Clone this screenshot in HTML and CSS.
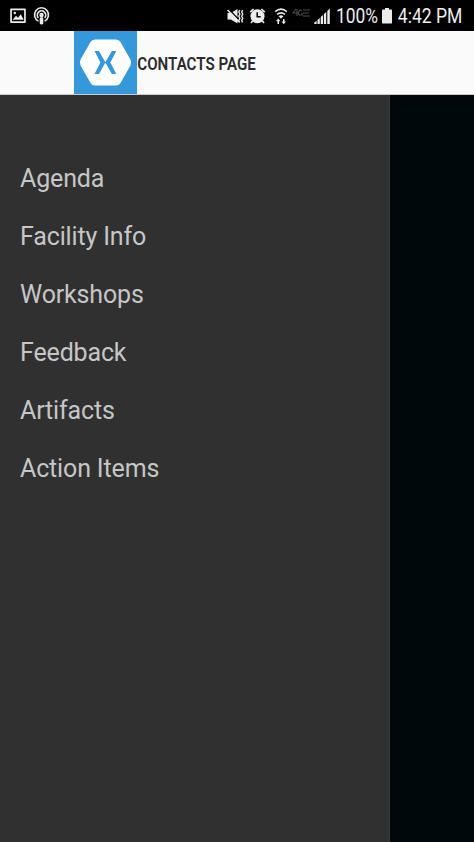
FILE: index.html
```html
<!DOCTYPE html>
<html lang="en">
<head>
<meta charset="utf-8">
<title>Contacts Page</title>
<link rel="stylesheet" href="styles.css">
</head>
<body>
<div class="screen">
  <div class="status-bar">
    <div class="status-left">
      <svg class="icon" width="16" height="16" viewBox="0 0 16 16"><path fill-rule="evenodd" d="M1 .5h14q.8 0 .8.8v12.900q0 .8-.8.8H1q-.8 0-.8-.8V1.300q0-.8.8-.8zM1.900 2.200v11.100h12.200V2.200z"/><path d="M2.600 11.700 6 7.700l2 2 2.700-3.400 3 5.400z"/><circle cx="4.800" cy="5" r="1.200"/></svg>
      <svg class="icon" width="17" height="18" viewBox="0 0 17 18"><g class="line"><path d="M5.400 14.100A7 7 0 1 1 11.600 14.100"/><path d="M5.400 10.900A4.200 4.200 0 1 1 11.600 10.900"/></g><circle cx="8.500" cy="8" r="2.200"/><rect x="6.700" y="10.300" width="3.600" height="7.200" rx="1.400"/></svg>
    </div>
    <div class="status-right">
      <svg class="icon mute" width="17" height="17" viewBox="0 0 17 17"><path d="M.5 5h3.300L10.500 1v14.500L3.800 11.600H.5z"/><path class="cut" d="M1.800 1 12.600 12.500"/><path class="line" d="M.6 2 12 14"/><path class="line thin" d="m12.700 2-.9 2 1.100 2-1.100 2.200 1.100 2.200-1.100 2.100.9 2m2.900-12.500-.9 2 1.100 2-1.100 2.200 1.100 2.200-1.100 2.100.9 2"/></svg>
      <svg class="icon alarm" width="17" height="16" viewBox="0 0 17 16"><circle cx="8.500" cy="8.200" r="7"/><path class="line" d="M1.200 4.200 4.600 1M15.800 4.200 12.400 1M3.500 13l-1.500 2M13.500 13l1.500 2"/><path class="clock-hand" d="M8.200 4.200v4.500h3.500"/></svg>
      <svg class="icon wifi" width="14" height="17" viewBox="0 0 14 17"><g class="line"><path d="M1.200 3.700q5.800-5 11.600 0M3.100 6.400q3.900-3.100 7.800 0"/></g><path d="M4.600 8.200q2.400-1.700 4.800 0L7 10.800zM4.200 10.500l2.200 2.700H5V16H3.500v-2.800H2zM9 11h1.500v2.500h1.500L9.700 16.300l-2.200-2.800H9z"/></svg>
      <svg class="lte" width="19" height="11" viewBox="0 0 19 11"><path d="M4 1 1 5h4M5 1v7M10 2.500Q8 1 6.800 3.500T7.500 7H10V5M11 2h7M11 5h6M11 8h7"/></svg>
      <svg class="icon signal" width="17" height="17" viewBox="0 0 17 17"><path d="M.3 14.500 2.600 12.800V16H.3zM3.500 12 5.800 10V16H3.500zM6.700 9 9 7V16H6.700zM9.900 6 12.200 4V16H9.900zM13.300 3 15.800.5V16h-2.500z"/></svg>
      <svg class="percent" width="42" height="24"><text x="0" y="19.300" textLength="42" lengthAdjust="spacingAndGlyphs">100%</text></svg>
      <svg class="icon battery" width="10" height="16" viewBox="0 0 10 16"><path d="M3 0h4v1.600h2.200q.8 0 .8.800v12.300q0 .9-.9.900H.9q-.9 0-.9-.9V2.400q0-.8.8-.8H3z"/></svg>
      <svg class="time" width="66" height="24"><text x=".8" y="19.300" textLength="64.500" lengthAdjust="spacingAndGlyphs">4:42 PM</text></svg>
    </div>
  </div>
  <header class="app-bar">
    <svg class="logo" width="63" height="63" viewBox="0 0 63 63"><path class="hexagon" d="M21 8.500h21q3 0 4.500 2.600l9.900 17.500q1.600 2.900 0 5.800l-9.900 17.500q-1.500 2.600-4.500 2.600H21q-3 0-4.500-2.600L6.600 34.400q-1.600-2.900 0-5.800l9.900-17.500Q18 8.500 21 8.500z"/><path class="mark" d="M20.500 20h4.500l5.900 10.500q.5 1 1 0L37.800 20h4.500L36.400 31.500 42.300 43h-4.500L31.900 32.500q-.5-1-1 0L25 43h-4.500l5.900-11.500z"/></svg>
    <svg class="title" width="122" height="63"><text x=".3" y="39" textLength="118.500" lengthAdjust="spacingAndGlyphs">CONTACTS PAGE</text></svg>
  </header>
  <main class="content">
    <nav class="drawer">
      <a class="item">Agenda</a>
      <a class="item">Facility Info</a>
      <a class="item">Workshops</a>
      <a class="item">Feedback</a>
      <a class="item">Artifacts</a>
      <a class="item">Action Items</a>
    </nav>
  </main>
</div>
</body>
</html>
```
FILE: styles.css
```css
body {
  margin: 0;
  background: #00080b;
  font-family: Roboto, "Liberation Sans", sans-serif;
}

.screen {
  display: flex;
  flex-direction: column;
  width: 474px;
  height: 842px;
  overflow: hidden;
}

svg {
  display: block;
  flex: none;
  overflow: visible;
}

.status-bar {
  display: flex;
  justify-content: space-between;
  box-sizing: border-box;
  height: 31px;
  padding: 4px 11px 0 10px;
  background: #000;
}

.status-left,
.status-right {
  display: flex;
  align-items: center;
  height: 24px;
}

.status-left {
  gap: 7px;
}

.icon {
  fill: #ececec;
}

.line {
  fill: none;
  stroke: #ececec;
  stroke-width: 1.6;
}

.thin {
  stroke-width: 1.4;
}

.cut {
  fill: none;
  stroke: #000;
  stroke-width: 1.2;
}

.clock-hand {
  fill: none;
  stroke: #000;
  stroke-width: 1.5;
}

.alarm {
  margin-left: 5px;
}

.wifi {
  margin: 1px 0 0 8px;
}

.lte {
  margin: 0 3px 6px 4px;
  fill: none;
  stroke: #4c4c4c;
  stroke-width: 1.1;
}

.percent {
  margin-left: 5px;
}

.battery {
  margin: 0 5px 0 4px;
}

.percent,
.time {
  fill: #eee;
  font-size: 19.5px;
}

.app-bar {
  display: flex;
  box-sizing: border-box;
  height: 64px;
  padding-left: 74px;
  border-bottom: 1px solid #c9cccc;
  background: #fafafa;
}

.logo {
  background: #3498db;
}

.hexagon {
  fill: #fff;
}

.mark {
  fill: #3498db;
}

.title {
  fill: #2b2b2b;
  font-size: 18.5px;
  font-weight: 600;
}

.content {
  display: flex;
  flex: 1;
}

.drawer {
  display: flex;
  flex-direction: column;
  box-sizing: border-box;
  width: 390px;
  padding: 55px 20px 0;
  border-right: 1px solid #393b3b;
  background: #303030;
}

.item {
  height: 58px;
  color: #c6c6c6;
  font-size: 25px;
  letter-spacing: -0.15px;
  line-height: 58px;
}
```
